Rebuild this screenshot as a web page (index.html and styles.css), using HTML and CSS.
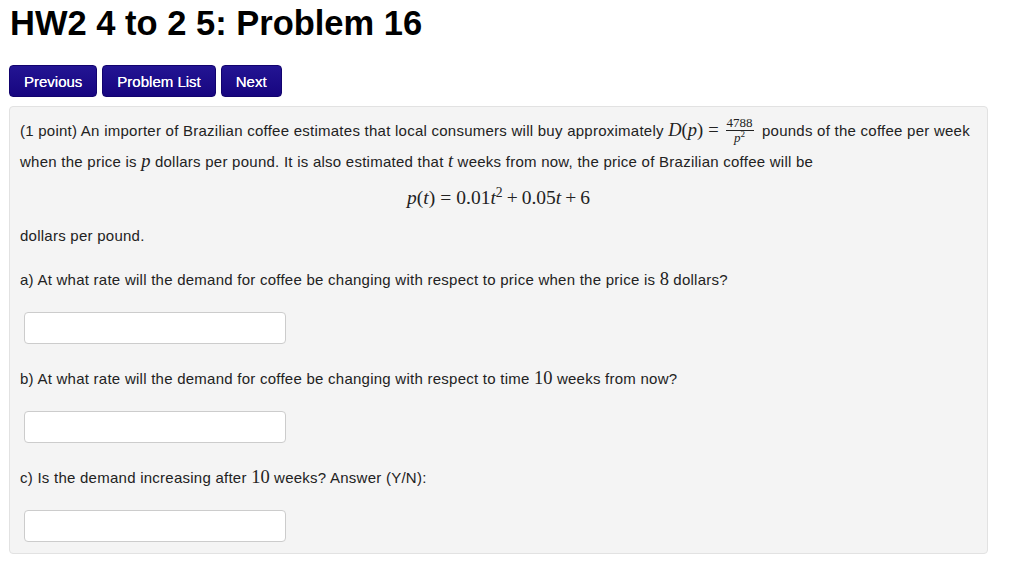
FILE: index.html
```html
<!DOCTYPE html>
<html lang="en">
  <head>
    <meta charset="UTF-8" />
    <meta name="viewport" content="width=device-width, initial-scale=1" />
    <title>HW2 4 to 2 5: Problem 16</title>
    <link rel="stylesheet" href="styles.css">
  </head>
  <body>
    <h1>HW2 4 to 2 5: Problem 16</h1>
    <div class="nav">
      <button class="nav-btn">Previous</button>
      <button class="nav-btn">Problem List</button>
      <button class="nav-btn">Next</button>
    </div>

    <div class="problem">
      <p class="intro">
        (1 point) An importer of Brazilian coffee estimates that local consumers will buy approximately
        <span class="math"><i>D</i>(<i>p</i>)<span class="op">=</span><span class="frac"><span class="num">4788</span><span class="den"><i>p</i><sup>2</sup></span></span></span>
        pounds of the coffee per week when the price is <span class="math"><i>p</i></span> dollars per pound.
        It is also estimated that <span class="math"><i>t</i></span> weeks from now, the price of Brazilian coffee will be
      </p>
      <div class="display">
        <span class="math"><i>p</i>(<i>t</i>)<span class="op">=</span>0.01<i>t</i><sup>2</sup><span class="bin">+</span>0.05<i>t</i><span class="bin">+</span>6</span>
      </div>
      <p class="text first">dollars per pound.</p>

      <p class="text">a) At what rate will the demand for coffee be changing with respect to price when the price is <span class="math">8</span> dollars?</p>
      <div class="answer"><input type="text" class="answer-input"></div>

      <p class="text">b) At what rate will the demand for coffee be changing with respect to time <span class="math">10</span> weeks from now?</p>
      <div class="answer"><input type="text" class="answer-input"></div>

      <p class="text">c) Is the demand increasing after <span class="math">10</span> weeks? Answer (Y/N):</p>
      <div class="answer"><input type="text" class="answer-input"></div>
    </div>
  </body>
</html>
```

FILE: styles.css
```css
body {
  font-family: "Liberation Sans", Arial, sans-serif;
  font-size: 15px;
  letter-spacing: 0.25px;
  color: #222;
  background: #fff;
  margin: 0;
  padding: 0 9px;
}
h1 {
  font-size: 34.5px;
  font-weight: bold;
  letter-spacing: 0;
  color: #000;
  line-height: 40px;
  margin: 3px 0 0 1px;
}
.nav {
  display: flex;
  gap: 5px;
  margin-top: 22px;
}
.nav-btn {
  font-family: "Liberation Sans", Arial, sans-serif;
  font-size: 15px;
  color: #fff;
  height: 32px;
  padding: 0 14px;
  border: 1px solid #12036e;
  border-radius: 4px;
  background: linear-gradient(#231593, #170680);
  text-shadow: 0 0 0.5px #fff;
  cursor: pointer;
}
.problem {
  width: 957px;
  margin-top: 9px;
  padding: 8px 10px 10px;
  background: #f4f4f4;
  border: 1px solid #e2e2e2;
  border-radius: 4px;
}
.intro {
  margin: 0;
  line-height: 30px;
}
.math {
  font-family: "Liberation Serif", "Times New Roman", serif;
  font-size: 18.5px;
  letter-spacing: 0;
  white-space: nowrap;
}
.text .math {
  line-height: 1;
}
.math sup {
  font-size: 70%;
  line-height: 0;
  vertical-align: 0.55em;
}
.op {
  margin: 0 5px;
}
.bin {
  margin: 0 4px;
}
.frac {
  display: inline-flex;
  flex-direction: column;
  align-items: center;
  vertical-align: middle;
  font-size: 13px;
  line-height: 13px;
  margin: 0 4px 0 2px;
  position: relative;
  top: -2px;
}
.frac .num {
  border-bottom: 1px solid #222;
  padding: 0 1px 1px;
}
.frac .den sup {
  vertical-align: 0.5em;
}
.display {
  text-align: center;
  line-height: 30px;
  margin: 6px 0;
}
.display .math {
  font-size: 19.5px;
}
.text {
  margin: 24px 0 0;
  line-height: 20px;
}
.text.first {
  margin-top: 12px;
}
.answer {
  margin: 22px 0 0 4px;
  padding-bottom: 1px;
}
.answer-input {
  display: block;
  width: 262px;
  height: 32px;
  box-sizing: border-box;
  border: 1px solid #ccc;
  border-radius: 4px;
  background: #fff;
  padding: 4px 6px;
}
```
